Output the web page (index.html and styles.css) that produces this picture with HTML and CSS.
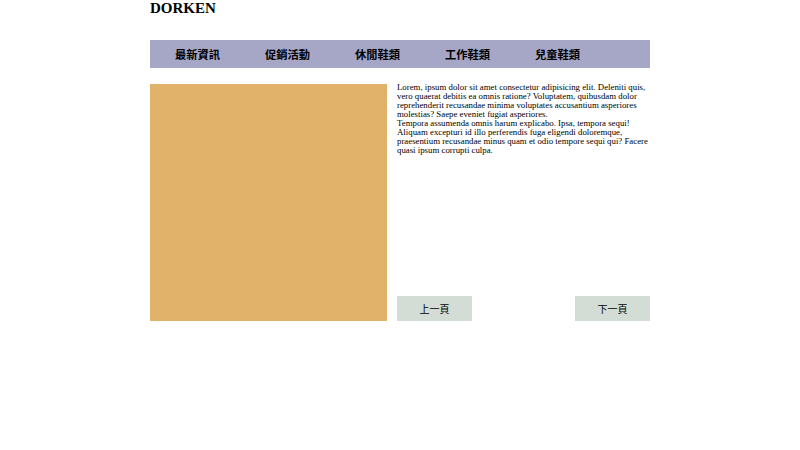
FILE: index.html
```html
<!DOCTYPE html>
<html lang="zh-Hant">
<head>
<meta charset="utf-8">
<title>DORKEN</title>
<link rel="stylesheet" href="styles.css">
</head>
<body>
<div class="wrap">
  <h1 class="logo">DORKEN</h1>
  <nav class="nav">
    <a class="nav-item">最新資訊</a>
    <a class="nav-item">促銷活動</a>
    <a class="nav-item">休閒鞋類</a>
    <a class="nav-item">工作鞋類</a>
    <a class="nav-item">兒童鞋類</a>
  </nav>
  <main class="content">
    <div class="photo"></div>
    <div class="side">
      <p class="desc">Lorem, ipsum dolor sit amet consectetur adipisicing elit. Deleniti quis, vero quaerat debitis ea omnis ratione? Voluptatem, quibusdam dolor reprehenderit recusandae minima voluptates accusantium asperiores molestias? Saepe eveniet fugiat asperiores.<br>Tempora assumenda omnis harum explicabo. Ipsa, tempora sequi! Aliquam excepturi id illo perferendis fuga eligendi doloremque, praesentium recusandae minus quam et odio tempore sequi qui? Facere quasi ipsum corrupti culpa.</p>
      <div class="pager">
        <button class="btn">上一頁</button>
        <button class="btn">下一頁</button>
      </div>
    </div>
  </main>
</div>
</body>
</html>
```

FILE: styles.css
```css
html, body {
  margin: 0;
  padding: 0;
  background: #ffffff;
}
body {
  font-family: "Liberation Serif", "Noto Sans CJK TC", serif;
  color: #000;
}
.wrap {
  width: 500px;
  margin: 0 auto;
}
.logo {
  margin: 0 0 23px;
  font-size: 15px;
  line-height: 17px;
  font-weight: bold;
}
.nav {
  display: flex;
  align-items: center;
  height: 28px;
  background: #a6a6c6;
  padding-left: 25px;
  gap: 45px;
}
.nav-item {
  font-family: "Noto Sans CJK TC", sans-serif;
  font-size: 11.25px;
  font-weight: bold;
  line-height: 14px;
  width: 45px;
  white-space: nowrap;
  color: #000;
}
.content {
  display: flex;
  gap: 10px;
  margin-top: 16px;
}
.photo {
  width: 237px;
  height: 237px;
  background: #e0b26a;
  flex: none;
}
.side {
  flex: 1;
  display: flex;
  flex-direction: column;
  justify-content: space-between;
}
.desc {
  margin: -1px 0 0;
  font-size: 8.8px;
  line-height: 9px;
}
.pager {
  display: flex;
  justify-content: space-between;
}
.btn {
  width: 75px;
  height: 25px;
  border: none;
  padding: 0;
  background: #d3ddd5;
  font-family: "Noto Sans CJK TC", sans-serif;
  font-size: 10px;
  color: #000;
}
```
